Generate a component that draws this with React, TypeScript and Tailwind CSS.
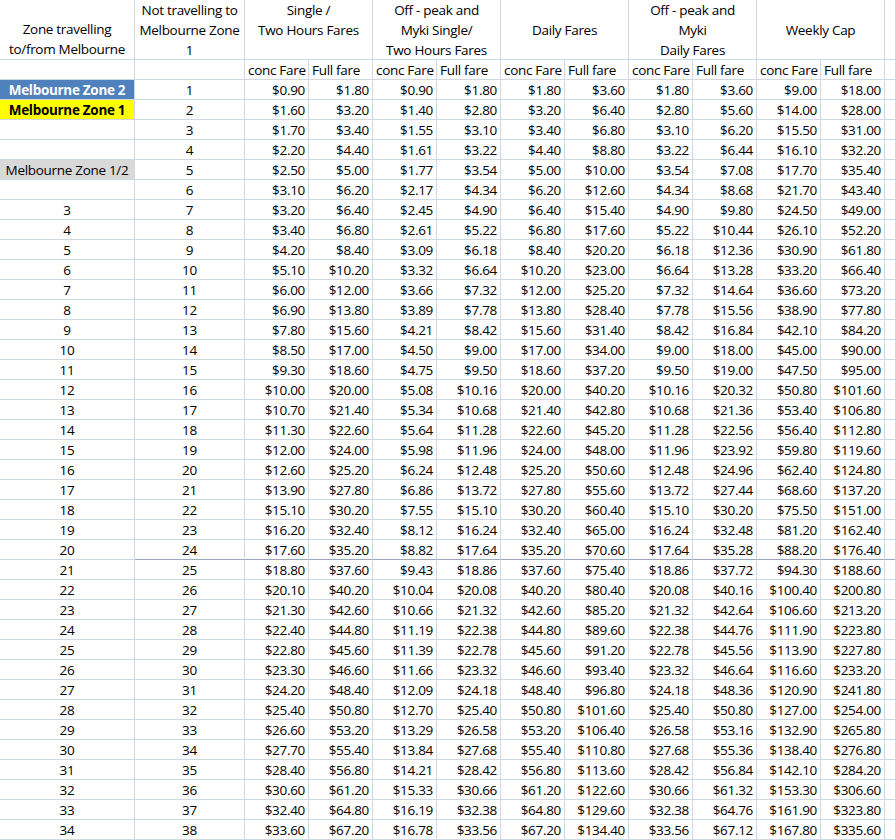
const rows: string[] = `1 0.90 1.80 0.90 1.80 1.80 3.60 1.80 3.60 9.00 18.00
2 1.60 3.20 1.40 2.80 3.20 6.40 2.80 5.60 14.00 28.00
3 1.70 3.40 1.55 3.10 3.40 6.80 3.10 6.20 15.50 31.00
4 2.20 4.40 1.61 3.22 4.40 8.80 3.22 6.44 16.10 32.20
5 2.50 5.00 1.77 3.54 5.00 10.00 3.54 7.08 17.70 35.40
6 3.10 6.20 2.17 4.34 6.20 12.60 4.34 8.68 21.70 43.40
7 3.20 6.40 2.45 4.90 6.40 15.40 4.90 9.80 24.50 49.00
8 3.40 6.80 2.61 5.22 6.80 17.60 5.22 10.44 26.10 52.20
9 4.20 8.40 3.09 6.18 8.40 20.20 6.18 12.36 30.90 61.80
10 5.10 10.20 3.32 6.64 10.20 23.00 6.64 13.28 33.20 66.40
11 6.00 12.00 3.66 7.32 12.00 25.20 7.32 14.64 36.60 73.20
12 6.90 13.80 3.89 7.78 13.80 28.40 7.78 15.56 38.90 77.80
13 7.80 15.60 4.21 8.42 15.60 31.40 8.42 16.84 42.10 84.20
14 8.50 17.00 4.50 9.00 17.00 34.00 9.00 18.00 45.00 90.00
15 9.30 18.60 4.75 9.50 18.60 37.20 9.50 19.00 47.50 95.00
16 10.00 20.00 5.08 10.16 20.00 40.20 10.16 20.32 50.80 101.60
17 10.70 21.40 5.34 10.68 21.40 42.80 10.68 21.36 53.40 106.80
18 11.30 22.60 5.64 11.28 22.60 45.20 11.28 22.56 56.40 112.80
19 12.00 24.00 5.98 11.96 24.00 48.00 11.96 23.92 59.80 119.60
20 12.60 25.20 6.24 12.48 25.20 50.60 12.48 24.96 62.40 124.80
21 13.90 27.80 6.86 13.72 27.80 55.60 13.72 27.44 68.60 137.20
22 15.10 30.20 7.55 15.10 30.20 60.40 15.10 30.20 75.50 151.00
23 16.20 32.40 8.12 16.24 32.40 65.00 16.24 32.48 81.20 162.40
24 17.60 35.20 8.82 17.64 35.20 70.60 17.64 35.28 88.20 176.40
25 18.80 37.60 9.43 18.86 37.60 75.40 18.86 37.72 94.30 188.60
26 20.10 40.20 10.04 20.08 40.20 80.40 20.08 40.16 100.40 200.80
27 21.30 42.60 10.66 21.32 42.60 85.20 21.32 42.64 106.60 213.20
28 22.40 44.80 11.19 22.38 44.80 89.60 22.38 44.76 111.90 223.80
29 22.80 45.60 11.39 22.78 45.60 91.20 22.78 45.56 113.90 227.80
30 23.30 46.60 11.66 23.32 46.60 93.40 23.32 46.64 116.60 233.20
31 24.20 48.40 12.09 24.18 48.40 96.80 24.18 48.36 120.90 241.80
32 25.40 50.80 12.70 25.40 50.80 101.60 25.40 50.80 127.00 254.00
33 26.60 53.20 13.29 26.58 53.20 106.40 26.58 53.16 132.90 265.80
34 27.70 55.40 13.84 27.68 55.40 110.80 27.68 55.36 138.40 276.80
35 28.40 56.80 14.21 28.42 56.80 113.60 28.42 56.84 142.10 284.20
36 30.60 61.20 15.33 30.66 61.20 122.60 30.66 61.32 153.30 306.60
37 32.40 64.80 16.19 32.38 64.80 129.60 32.38 64.76 161.90 323.80
38 33.60 67.20 16.78 33.56 67.20 134.40 33.56 67.12 167.80 335.60`.split("\n");

const cell = "border-r border-b border-[#d0d7e5] h-[20px] leading-[20px] px-[3px] whitespace-nowrap overflow-hidden";

function ZoneCell({ n }: { n: number }) {
  if (n === 1) return <div className={`${cell} bg-[#4f81bd] text-white font-bold text-center`}>Melbourne Zone 2</div>;
  if (n === 2) return <div className={`${cell} bg-[#ffff00] text-black font-bold text-center`}>Melbourne Zone 1</div>;
  if (n === 5) return <div className={`${cell} bg-[#d9d9d9] text-center`}>Melbourne Zone 1/2</div>;
  if (n < 7) return <div className={cell} />;
  return <div className={`${cell} text-center`}>{n - 4}</div>;
}

const groups = [
  ["Off - peak and", "Myki Single/", "Two Hours Fares"],
  ["", "Daily Fares", ""],
  ["Off - peak and", "Myki", "Daily Fares"],
  ["", "Weekly Cap", ""],
];

export default function App() {
  return (
    <div
      className="w-[895px] h-[840px] overflow-hidden bg-white text-[13.5px] text-black grid grid-cols-[135px_110px_repeat(10,64px)_10px]"
      style={{ fontFamily: '"Open Sans", "Liberation Sans", sans-serif', letterSpacing: "-0.3px" }}
    >
      <div className="border-r border-b border-[#d0d7e5] h-[60px] flex flex-col justify-end items-center leading-[20px]">
        <span>Zone travelling</span>
        <span>to/from Melbourne</span>
      </div>
      <div className="border-r border-b border-[#d0d7e5] h-[60px] flex flex-col items-center leading-[20px]">
        <span>Not travelling to</span>
        <span>Melbourne Zone</span>
        <span>1</span>
      </div>
      <div className="col-span-2 border-r border-b border-[#d0d7e5] h-[60px] flex flex-col items-center leading-[20px]">
        <span>Single /</span>
        <span>Two Hours Fares</span>
      </div>
      {groups.map((g, i) => (
        <div key={i} className="col-span-2 border-r border-b border-[#d0d7e5] h-[60px] flex flex-col items-center leading-[20px]">
          {g.map((t, j) => (
            <span key={j} className="h-[20px]">{t}</span>
          ))}
        </div>
      ))}
      <div className="border-b border-[#d0d7e5] h-[60px]" />

      <div className={cell} />
      <div className={cell} />
      {Array.from({ length: 10 }).map((_, i) => (
        <div key={i} className={cell}>{i % 2 === 0 ? "conc Fare" : "Full fare"}</div>
      ))}
      <div className="border-b border-[#d0d7e5] h-[20px]" />

      {rows.map((r) => {
        const v = r.split(" ");
        const n = Number(v[0]);
        const dark = n === 24 ? "!border-b-[#9ba7bd]" : "";
        return [
          <ZoneCell key={`z${n}`} n={n} />,
          <div key={`n${n}`} className={`${cell} text-center ${dark}`}>{n}</div>,
          ...v.slice(1).map((p, i) => (
            <div key={`${n}-${i}`} className={`${cell} text-right ${dark}`}>${p}</div>
          )),
          <div key={`e${n}`} className={`border-b border-[#d0d7e5] h-[20px] ${dark}`} />,
        ];
      })}
    </div>
  );
}
